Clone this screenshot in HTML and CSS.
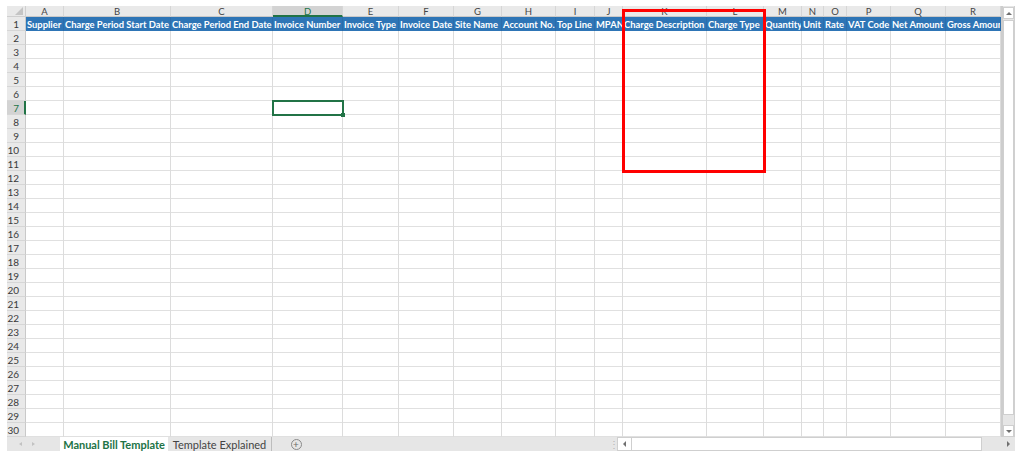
FILE: index.html
```html
<!DOCTYPE html>
<html>
<head>
<meta charset="utf-8">
<link rel="stylesheet" href="styles.css">
</head>
<body>
<div class="app">
  <div class="main">
    <div class="sheet">
      <div class="corner"><span class="tri"></span></div>
      <div class="ch">A</div><div class="ch">B</div><div class="ch">C</div><div class="ch sel">D</div><div class="ch">E</div><div class="ch">F</div><div class="ch">G</div><div class="ch">H</div><div class="ch">I</div><div class="ch">J</div><div class="ch">K</div><div class="ch">L</div><div class="ch">M</div><div class="ch">N</div><div class="ch">O</div><div class="ch">P</div><div class="ch">Q</div><div class="ch">R</div>

      <div class="rn">1</div>
      <div class="t">Supplier</div><div class="t">Charge Period Start Date</div><div class="t">Charge Period End Date</div><div class="t">Invoice Number</div><div class="t">Invoice Type</div><div class="t">Invoice Date</div><div class="t">Site Name</div><div class="t">Account No.</div><div class="t">Top Line</div><div class="t">MPAN</div><div class="t">Charge Description</div><div class="t">Charge Type</div><div class="t">Quantity</div><div class="t">Unit</div><div class="t">Rate</div><div class="t">VAT Code</div><div class="t">Net Amount</div><div class="t">Gross Amount</div>

      <div class="rowhdr">
        <div class="rn">2</div><div class="rn">3</div><div class="rn">4</div><div class="rn">5</div><div class="rn">6</div><div class="rn sel">7</div><div class="rn">8</div><div class="rn">9</div><div class="rn">10</div><div class="rn">11</div><div class="rn">12</div><div class="rn">13</div><div class="rn">14</div><div class="rn">15</div><div class="rn">16</div><div class="rn">17</div><div class="rn">18</div><div class="rn">19</div><div class="rn">20</div><div class="rn">21</div><div class="rn">22</div><div class="rn">23</div><div class="rn">24</div><div class="rn">25</div><div class="rn">26</div><div class="rn">27</div><div class="rn">28</div><div class="rn">29</div><div class="rn">30</div>
      </div>
      <div class="body"></div><div class="body"></div><div class="body"></div><div class="body"></div><div class="body"></div><div class="body"></div><div class="body"></div><div class="body"></div><div class="body"></div><div class="body"></div><div class="body"></div><div class="body"></div><div class="body"></div><div class="body"></div><div class="body"></div><div class="body"></div><div class="body"></div><div class="body"></div>

      <div class="active-cell"><span class="handle"></span></div>
      <div class="highlight"></div>
    </div>
    <div class="vscroll">
      <div class="sbtn up"><span class="arr-up"></span></div>
      <div class="vthumb"></div>
      <div class="sbtn down"><span class="arr-down"></span></div>
    </div>
  </div>
  <div class="tabbar">
    <div class="nav"><span class="nav-l"></span><span class="nav-r"></span></div>
    <div class="tab active">Manual Bill Template</div>
    <div class="tab">Template Explained</div>
    <div class="add"><span class="plus">+</span></div>
    <div class="spacer"></div>
    <div class="dots">⋮</div>
    <div class="hscroll">
      <div class="hbtn"><span class="arr-left"></span></div>
      <div class="hthumb"></div>
      <div class="htrack"></div>
      <div class="hbtn right"><span class="arr-right"></span></div>
    </div>
  </div>
</div>
</body>
</html>
```
FILE: styles.css
```css
html, body {
  margin: 0;
  padding: 0;
  background: #ffffff;
}
body {
  font-family: Lato, "Liberation Sans", sans-serif;
  width: 1024px;
  height: 461px;
  overflow: hidden;
}
.app {
  padding: 6px 0 0 7px;
  width: 1008px;
}
.main {
  display: flex;
}
.sheet {
  position: relative;
  display: grid;
  grid-template-columns: 19px 38px 107px 102px 70px 56px 55px 48px 54px 39px 28px 84px 57px 38px 22px 23px 44px 55px 55px;
  grid-template-rows: 11px 14px 406px;
  width: 994px;
}
.corner {
  position: relative;
  background: #e9e9e9;
  border-right: 1px solid #cfcfcf;
  border-bottom: 1px solid #cfcfcf;
  box-sizing: border-box;
}
.tri {
  position: absolute;
  right: 2px;
  bottom: 1px;
  width: 0;
  height: 0;
  border-left: 8px solid transparent;
  border-bottom: 8px solid #c4c4c4;
}
.ch {
  background: #e9e9e9;
  border-right: 1px solid #d6d6d6;
  border-bottom: 1px solid #c9c9c9;
  box-sizing: border-box;
  font-size: 9.5px;
  line-height: 10px;
  padding-top: 1px;
  color: #444444;
  text-align: center;
}
.ch.sel {
  background: #d3d3d3;
  color: #217346;
  border-bottom: 2px solid #217346;
}
.rn {
  background: #e9e9e9;
  border-right: 1px solid #c9c9c9;
  border-bottom: 1px solid #d6d6d6;
  box-sizing: border-box;
  height: 14px;
  font-size: 10px;
  line-height: 13px;
  padding-top: 1px;
  color: #3a3a3a;
  text-align: right;
  padding-right: 6px;
}
.rn.sel {
  background: #d3d3d3;
  color: #217346;
  border-right: 2px solid #217346;
  padding-right: 5px;
}
.rowhdr {
  display: flex;
  flex-direction: column;
}
.t {
  background: #2e75b6;
  color: #ffffff;
  font-weight: 700;
  font-size: 9.4px;
  line-height: 13px;
  padding-top: 1px;
  white-space: nowrap;
  overflow: hidden;
  padding-left: 1px;
  border-right: 1px solid #2b6dab;
  box-sizing: border-box;
}
.body {
  border-right: 1px solid #dcdcdc;
  box-sizing: border-box;
  background: repeating-linear-gradient(to bottom, #ffffff 0, #ffffff 13px, #e0e0e0 13px, #e0e0e0 14px);
}
.active-cell {
  position: absolute;
  left: 265px;
  top: 94px;
  width: 72px;
  height: 16px;
  border: 2px solid #217346;
  box-sizing: border-box;
}
.handle {
  position: absolute;
  right: -3px;
  bottom: -3px;
  width: 4px;
  height: 4px;
  background: #217346;
}
.highlight {
  position: absolute;
  left: 615px;
  top: 3px;
  width: 144px;
  height: 164px;
  border: 3px solid #ff0000;
  box-sizing: border-box;
}
.vscroll {
  width: 14px;
  height: 431px;
  box-sizing: border-box;
  border-left: 2px solid #cdcdcd;
  border-right: 1px solid #d0d0d0;
  background: #e6e6e6;
  display: flex;
  flex-direction: column;
}
.sbtn {
  height: 12px;
  background: #ffffff;
  border: 1px solid #cfcfcf;
  box-sizing: border-box;
  display: flex;
  align-items: center;
  justify-content: center;
}
.sbtn.up {
  margin-top: 1px;
}
.arr-up {
  width: 0;
  height: 0;
  border-left: 3px solid transparent;
  border-right: 3px solid transparent;
  border-bottom: 3px solid #707070;
}
.arr-down {
  width: 0;
  height: 0;
  border-left: 3px solid transparent;
  border-right: 3px solid transparent;
  border-top: 3px solid #707070;
}
.vthumb {
  flex: 1;
  margin: 1px 0 10px 0;
  background: #ffffff;
  border: 1px solid #cfcfcf;
}
.tabbar {
  display: flex;
  height: 14px;
  background: #e6e6e6;
  width: 1008px;
  font-size: 11px;
  line-height: 14px;
}
.nav {
  width: 53px;
  display: flex;
  align-items: center;
  gap: 10px;
  padding-left: 12px;
  box-sizing: border-box;
}
.nav-l {
  width: 0;
  height: 0;
  border-top: 2.5px solid transparent;
  border-bottom: 2.5px solid transparent;
  border-right: 3px solid #c2c2c2;
}
.nav-r {
  width: 0;
  height: 0;
  border-top: 2.5px solid transparent;
  border-bottom: 2.5px solid transparent;
  border-left: 3px solid #c2c2c2;
}
.tab {
  width: 104px;
  box-sizing: border-box;
  text-align: center;
  color: #444444;
  border-right: 1px solid #bdbdbd;
  white-space: nowrap;
  padding-top: 1px;
  line-height: 13px;
}
.tab.active {
  width: 108px;
  background: #ffffff;
  color: #217346;
  font-weight: 700;
  border-right: none;
}
.add {
  width: 48px;
  display: flex;
  align-items: center;
  justify-content: center;
}
.plus {
  width: 9px;
  height: 9px;
  border: 1px solid #8a8a8a;
  border-radius: 50%;
  font-size: 10px;
  line-height: 9px;
  text-align: center;
  color: #6a6a6a;
}
.spacer {
  flex: 1;
}
.dots {
  width: 8px;
  color: #b5b5b5;
  font-size: 10px;
  text-align: center;
}
.hscroll {
  width: 398px;
  display: flex;
  align-items: stretch;
}
.hbtn {
  width: 15px;
  background: #ffffff;
  border: 1px solid #cfcfcf;
  box-sizing: border-box;
  display: flex;
  align-items: center;
  justify-content: center;
}
.hbtn.right {
  width: 13px;
  background: #e6e6e6;
  border: none;
}
.arr-left {
  width: 0;
  height: 0;
  border-top: 3px solid transparent;
  border-bottom: 3px solid transparent;
  border-right: 3px solid #707070;
}
.arr-right {
  width: 0;
  height: 0;
  border-top: 3px solid transparent;
  border-bottom: 3px solid transparent;
  border-left: 3px solid #707070;
}
.hthumb {
  width: 350px;
  background: #ffffff;
  border: 1px solid #cfcfcf;
  border-left: none;
  box-sizing: border-box;
}
.htrack {
  flex: 1;
}
```
